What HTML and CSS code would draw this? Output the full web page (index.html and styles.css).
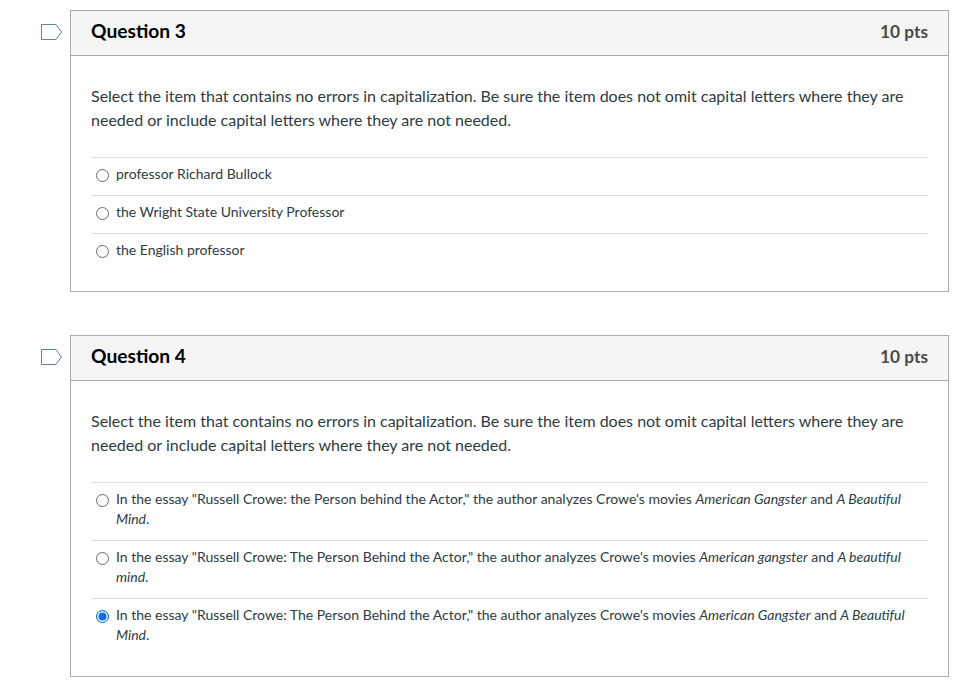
FILE: index.html
```html
<!DOCTYPE html>
<html lang="en">
<head>
<meta charset="utf-8">
<title>Quiz</title>
<link rel="stylesheet" href="styles.css">
</head>
<body>
<main class="quiz">
  <section class="item">
    <svg class="flag" viewBox="0 0 21 16" aria-hidden="true"><path d="M.5 .5H15L20.4 8L15 15.5H.5Z"/></svg>
    <div class="card">
      <header class="head"><h2 class="title">Question 3</h2><span class="pts">10 pts</span></header>
      <div class="body">
        <p class="prompt">Select the item that contains no errors in capitalization. Be sure the item does not omit capital letters where they are needed or include capital letters where they are not needed.</p>
        <div class="answers">
          <div class="answer"><span class="radio"></span><div class="label">professor Richard Bullock</div></div>
          <div class="answer"><span class="radio"></span><div class="label">the Wright State University Professor</div></div>
          <div class="answer"><span class="radio"></span><div class="label">the English professor</div></div>
        </div>
      </div>
    </div>
  </section>
  <section class="item">
    <svg class="flag" viewBox="0 0 21 16" aria-hidden="true"><path d="M.5 .5H15L20.4 8L15 15.5H.5Z"/></svg>
    <div class="card">
      <header class="head"><h2 class="title">Question 4</h2><span class="pts">10 pts</span></header>
      <div class="body">
        <p class="prompt">Select the item that contains no errors in capitalization. Be sure the item does not omit capital letters where they are needed or include capital letters where they are not needed.</p>
        <div class="answers">
          <div class="answer"><span class="radio"></span><div class="label">In the essay "Russell Crowe: the Person behind the Actor," the author analyzes Crowe's movies <em>American Gangster</em> and <em>A Beautiful Mind</em>.</div></div>
          <div class="answer"><span class="radio"></span><div class="label">In the essay "Russell Crowe: The Person Behind the Actor," the author analyzes Crowe's movies <em>American gangster</em> and <em>A beautiful mind</em>.</div></div>
          <div class="answer"><span class="radio checked"></span><div class="label">In the essay "Russell Crowe: The Person Behind the Actor," the author analyzes Crowe's movies <em>American Gangster</em> and <em>A Beautiful Mind</em>.</div></div>
        </div>
      </div>
    </div>
  </section>
</main>
</body>
</html>
```
FILE: styles.css
```css
* { box-sizing: border-box; }
html, body { margin: 0; background: #fff; }
body { font-family: Lato, "Open Sans", sans-serif; color: #2d3b45; }
.quiz { padding: 10px 14px 0 41px; display: flex; flex-direction: column; gap: 43px; }
.item { display: flex; align-items: flex-start; }
.flag { flex: none; width: 21px; height: 16px; margin-top: 14px; margin-right: 8px; }
.flag path { fill: #fff; stroke: #5c85a3; stroke-width: 1; }
.card { flex: 1; min-width: 0; border: 1px solid #aaa; }
.head { height: 45px; display: flex; justify-content: space-between; align-items: center; padding: 0 20px 4px; background: #f5f5f5; border-bottom: 1px solid #aaa; }
.title { margin: 0; font-size: 19.2px; font-weight: 700; color: #000; line-height: 24px; }
.pts { font-size: 17.3px; font-weight: 700; color: #4a4a4a; }
.body { padding: 28px 20px 20px; }
.prompt { margin: 0 0 25px; font-size: 16px; line-height: 24px; color: #2d3b45; }
.answer { display: flex; align-items: flex-start; padding: 6px 0 11px 5px; border-top: 1px solid #ddd; font-size: 14px; line-height: 20px; }
.radio { flex: none; width: 13px; height: 13px; margin: 5px 7px 0 0; border: 1px solid #6b6b6b; border-radius: 50%; background: #fff; }
.radio.checked { border: 1.5px solid #0a6ee8; background: #0a6ee8; box-shadow: inset 0 0 0 1.5px #fff; }
.label { flex: 1; min-width: 0; }
```
